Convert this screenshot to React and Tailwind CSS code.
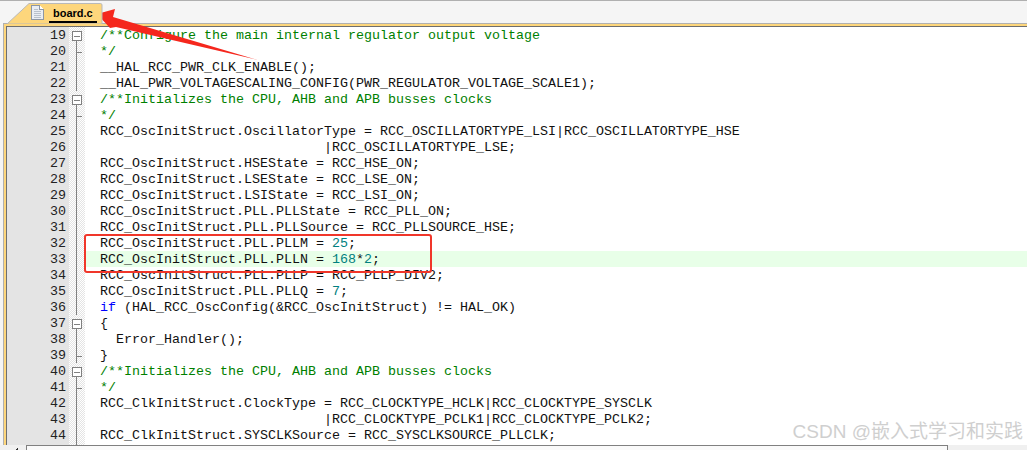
import React from 'react';

const C = 'text-[#008000]';
const N = 'text-[#008080]';
const K = 'text-[#0000ff]';

// each line: number, fold marker, code parts
const LINES = [
  [19, 'box', [['/**Configure the main internal regulator output voltage', C]]],
  [20, 'end', [['*/', C]]],
  [21, 'line', [['__HAL_RCC_PWR_CLK_ENABLE();']]],
  [22, 'line', [['__HAL_PWR_VOLTAGESCALING_CONFIG(PWR_REGULATOR_VOLTAGE_SCALE1);']]],
  [23, 'box', [['/**Initializes the CPU, AHB and APB busses clocks', C]]],
  [24, 'end', [['*/', C]]],
  [25, 'line', [['RCC_OscInitStruct.OscillatorType = RCC_OSCILLATORTYPE_LSI|RCC_OSCILLATORTYPE_HSE']]],
  [26, 'line', [['                            |RCC_OSCILLATORTYPE_LSE;']]],
  [27, 'line', [['RCC_OscInitStruct.HSEState = RCC_HSE_ON;']]],
  [28, 'line', [['RCC_OscInitStruct.LSEState = RCC_LSE_ON;']]],
  [29, 'line', [['RCC_OscInitStruct.LSIState = RCC_LSI_ON;']]],
  [30, 'line', [['RCC_OscInitStruct.PLL.PLLState = RCC_PLL_ON;']]],
  [31, 'line', [['RCC_OscInitStruct.PLL.PLLSource = RCC_PLLSOURCE_HSE;']]],
  [32, 'line', [['RCC_OscInitStruct.PLL.PLLM = '], ['25', N], [';']]],
  [33, 'line', [['RCC_OscInitStruct.PLL.PLLN = '], ['168', N], ['*'], ['2', N], [';']]],
  [34, 'line', [['RCC_OscInitStruct.PLL.PLLP = RCC_PLLP_DIV2;']]],
  [35, 'line', [['RCC_OscInitStruct.PLL.PLLQ = '], ['7', N], [';']]],
  [36, 'line', [['if', K], [' (HAL_RCC_OscConfig(&RCC_OscInitStruct) != HAL_OK)']]],
  [37, 'box', [['{']]],
  [38, 'line', [['  Error_Handler();']]],
  [39, 'end', [['}']]],
  [40, 'box', [['/**Initializes the CPU, AHB and APB busses clocks', C]]],
  [41, 'end', [['*/', C]]],
  [42, 'line', [['RCC_ClkInitStruct.ClockType = RCC_CLOCKTYPE_HCLK|RCC_CLOCKTYPE_SYSCLK']]],
  [43, 'line', [['                            |RCC_CLOCKTYPE_PCLK1|RCC_CLOCKTYPE_PCLK2;']]],
  [44, 'line', [['RCC_ClkInitStruct.SYSCLKSource = RCC_SYSCLKSOURCE_PLLCLK;']]],
  ['', 'line', [['']]],
];

function Fold({ type }) {
  return (
    <svg width="16" height="16" className="block shrink-0" shapeRendering="crispEdges">
      {type === 'box' && (
        <>
          <path d="M7.5 13V16" stroke="#808080" fill="none" />
          <rect x="3.5" y="4.5" width="9" height="9" stroke="#808080" fill="#fff" />
          <path d="M5 9.5H11" stroke="#808080" fill="none" />
        </>
      )}
      {type === 'line' && <path d="M7.5 0V16" stroke="#808080" fill="none" />}
      {type === 'end' && <path d="M7.5 0V16M7.5 9.5H13" stroke="#808080" fill="none" />}
    </svg>
  );
}

function CodeRow({ num, fold, parts }) {
  return (
    <div className="flex h-4 leading-4">
      <div className="w-[62px] shrink-0 bg-[#e4e4e4] pt-px pr-[3px] text-right text-[#222]">{num}</div>
      <div className="w-4 shrink-0 bg-[repeating-conic-gradient(#e4e4e4_0_25%,#ffffff_0_50%)] bg-[length:2px_2px]">
        <Fold type={fold} />
      </div>
      <div className={`flex-1 whitespace-pre pt-px pl-[15px] text-[#111] ${num === 33 ? 'bg-[#e8ffe8]' : 'bg-white'}`}>
        {parts.map(([text, color], i) => (
          <span key={i} className={color}>{text}</span>
        ))}
      </div>
    </div>
  );
}

function FileIcon() {
  return (
    <svg width="13" height="15" viewBox="0 0 13 15" className="block shrink-0" shapeRendering="crispEdges">
      <path d="M.5.5H8.5L12.5 4.5V14.5H.5Z" fill="#e9edf3" stroke="#8d97a5" />
      <path d="M8.5.5V4.5H12.5" fill="#fff" stroke="#8d97a5" />
      <path d="M3 4H7M3 6H10M3 8H10M3 10H10M3 12H10" stroke="#b9c1cc" />
    </svg>
  );
}

function App() {
  return (
    <div className="relative flex h-[450px] w-[1027px] flex-col overflow-hidden bg-[#f5f5f5] font-['Liberation_Mono',monospace] text-[13.33px]">
      {/* tab strip */}
      <div className="flex h-[23px] shrink-0 items-start border-t border-t-[#b0b0b0] pt-[2px] pl-[7px]">
        <div className="relative z-10 h-[21px] w-[96px]">
          <svg width="96" height="21" className="absolute inset-0">
            <path d="M0 21L22 .5H93.5Q95 .5 95 2V21Z" fill="#fdd67c" stroke="#b9b9b9" />
          </svg>
          <div className="relative flex items-start pt-[2px] pl-[24px]">
            <FileIcon />
            <span className="ml-[5px] h-[18px] border-b-2 border-black px-1 font-['Liberation_Sans',sans-serif] text-[11px] leading-4 font-bold text-black">
              board.c
            </span>
          </div>
        </div>
      </div>

      {/* editor frame */}
      <div className="ml-[3px] flex-1 overflow-hidden border-t border-l border-[#b0b0b0]">
        <div className="h-full border-t-2 border-l-2 border-[#fdd67c]">
          <div className="h-full overflow-hidden border-t border-l border-[#6e6e6e]">
            {LINES.map(([num, fold, parts]) => (
              <CodeRow key={num} num={num} fold={fold} parts={parts} />
            ))}
          </div>
        </div>
      </div>

      {/* horizontal scroll bar */}
      <div className="flex h-[5px] shrink-0 bg-[#f0f0f0] pl-[15px]">
        <svg width="11" height="5" className="block shrink-0" shapeRendering="crispEdges">
          <path d="M1 4.5H3M2 3.5H3" stroke="#333" fill="none" />
        </svg>
        <div className="w-[922px] border-t border-r border-l border-[#808080] bg-[#fafafa]" />
      </div>

      {/* annotations */}
      <div className="absolute top-[234px] left-[84px] h-[39px] w-[348px] rounded-[3px] border-2 border-[#f0362a]" />
      <svg width="1027" height="100" className="pointer-events-none absolute top-0 left-0">
        <path d="M97 14L115 9L113 17L258 60L116 27L110 28Z" fill="#f5271d" />
      </svg>
      <div className="absolute right-[4px] bottom-[4px] font-['Liberation_Sans','Noto_Sans_CJK_SC',sans-serif] text-[19px] leading-[28px] text-[#cfcfcf]">
        CSDN @嵌入式学习和实践
      </div>
    </div>
  );
}

export default App;
